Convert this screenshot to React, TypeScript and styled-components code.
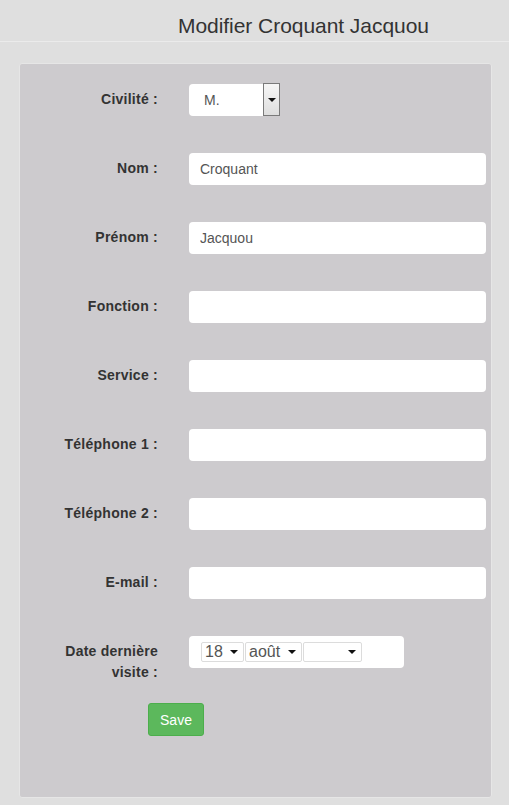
import React from "react";
import styled, { createGlobalStyle } from "styled-components";

const Global = createGlobalStyle`
  html, body { margin: 0; padding: 0; background: #dfdfdf; }
  body { font-family: "Liberation Sans", Arial, sans-serif; color: #333; }
  * { box-sizing: border-box; }
`;

const Page = styled.div`
  width: 509px;
  min-height: 805px;
  background: #dfdfdf;
  display: flex;
  flex-direction: column;
`;

const Header = styled.header`
  height: 42px;
  border-bottom: 1px solid #ebebeb;
  display: flex;
  align-items: flex-start;
  padding: 15px 0 0 178px;
`;

const Title = styled.h1`
  margin: 0;
  font-size: 21px;
  font-weight: normal;
  color: #333;
  line-height: 1;
  letter-spacing: -0.05px;
`;

const Panel = styled.form`
  margin: 21px 17px 7px 19px;
  width: 473px;
  height: 735px;
  background: #cdcbce;
  border: 1px solid #e6e6e6;
  border-radius: 3px;
  padding: 20px 5px 0 0;
  display: flex;
  flex-direction: column;
  gap: 37px;
`;

const Row = styled.div`
  display: grid;
  grid-template-columns: 138px 297px;
  column-gap: 31px;
  align-items: start;
`;

const Label = styled.label`
  text-align: right;
  font-size: 14px;
  font-weight: bold;
  color: #333;
  line-height: 21px;
  padding-top: 5px;
  letter-spacing: 0.25px;
`;

const TextInput = styled.input`
  width: 297px;
  height: 32px;
  border: none;
  border-radius: 4px;
  background: #fff;
  padding: 0 11px;
  font-family: "Liberation Sans", Arial, sans-serif;
  font-size: 14px;
  color: #555;
  outline: none;
`;

const SelectBox = styled.div`
  width: 91px;
  height: 32px;
  display: flex;
  background: #fff;
  border-radius: 4px 0 0 4px;
`;

const SelectValue = styled.div`
  flex: 1;
  font-size: 14px;
  color: #555;
  padding-left: 15px;
  display: flex;
  align-items: center;
`;

const SelectButton = styled.div`
  width: 17px;
  height: 33px;
  margin-top: -1px;
  border: 1px solid #7a7a7a;
  background: linear-gradient(#f6f6f6, #dedede);
  display: flex;
  align-items: center;
  justify-content: center;
`;

const Arrow = styled.span<{ $size?: number }>`
  width: 0;
  height: 0;
  border-left: ${(p) => p.$size ?? 4}px solid transparent;
  border-right: ${(p) => p.$size ?? 4}px solid transparent;
  border-top: ${(p) => p.$size ?? 4}px solid #111;
`;

const DateBox = styled.div`
  width: 215px;
  height: 32px;
  background: #fff;
  border-radius: 4px;
  display: flex;
  align-items: center;
  padding-left: 12px;
  gap: 1px;
`;

const MiniSelect = styled.div<{ $w: number }>`
  width: ${(p) => p.$w}px;
  height: 20px;
  border: 1px solid #dcdcdc;
  border-radius: 2px;
  display: flex;
  align-items: center;
  justify-content: space-between;
  padding: 0 5px 0 3px;
  font-size: 16px;
  color: #555;
`;

const ButtonRow = styled.div`
  padding-left: 128px;
  margin-top: -17px;
`;

const SaveButton = styled.button`
  width: 56px;
  height: 33px;
  background: #5cb85c;
  border: 1px solid #4cae4c;
  border-radius: 3px;
  color: #fff;
  font-family: "Liberation Sans", Arial, sans-serif;
  font-size: 14px;
  padding: 0;
`;

const fields: { label: string; value: string }[] = [
  { label: "Nom :", value: "Croquant" },
  { label: "Prénom :", value: "Jacquou" },
  { label: "Fonction :", value: "" },
  { label: "Service :", value: "" },
  { label: "Téléphone 1 :", value: "" },
  { label: "Téléphone 2 :", value: "" },
  { label: "E-mail :", value: "" },
];

export default function App() {
  return (
    <Page>
      <Global />
      <Header>
        <Title>Modifier Croquant Jacquou</Title>
      </Header>
      <Panel onSubmit={(e) => e.preventDefault()}>
        <Row>
          <Label>Civilité :</Label>
          <SelectBox>
            <SelectValue>M.</SelectValue>
            <SelectButton>
              <Arrow $size={4} />
            </SelectButton>
          </SelectBox>
        </Row>
        {fields.map((f) => (
          <Row key={f.label}>
            <Label>{f.label}</Label>
            <TextInput defaultValue={f.value} />
          </Row>
        ))}
        <Row>
          <Label>
            Date dernière
            <br />
            visite :
          </Label>
          <DateBox>
            <MiniSelect $w={43}>
              <span>18</span>
              <Arrow $size={4} />
            </MiniSelect>
            <MiniSelect $w={57}>
              <span>août</span>
              <Arrow $size={4} />
            </MiniSelect>
            <MiniSelect $w={59}>
              <span></span>
              <Arrow $size={4} />
            </MiniSelect>
          </DateBox>
        </Row>
        <ButtonRow>
          <SaveButton type="submit">Save</SaveButton>
        </ButtonRow>
      </Panel>
    </Page>
  );
}
